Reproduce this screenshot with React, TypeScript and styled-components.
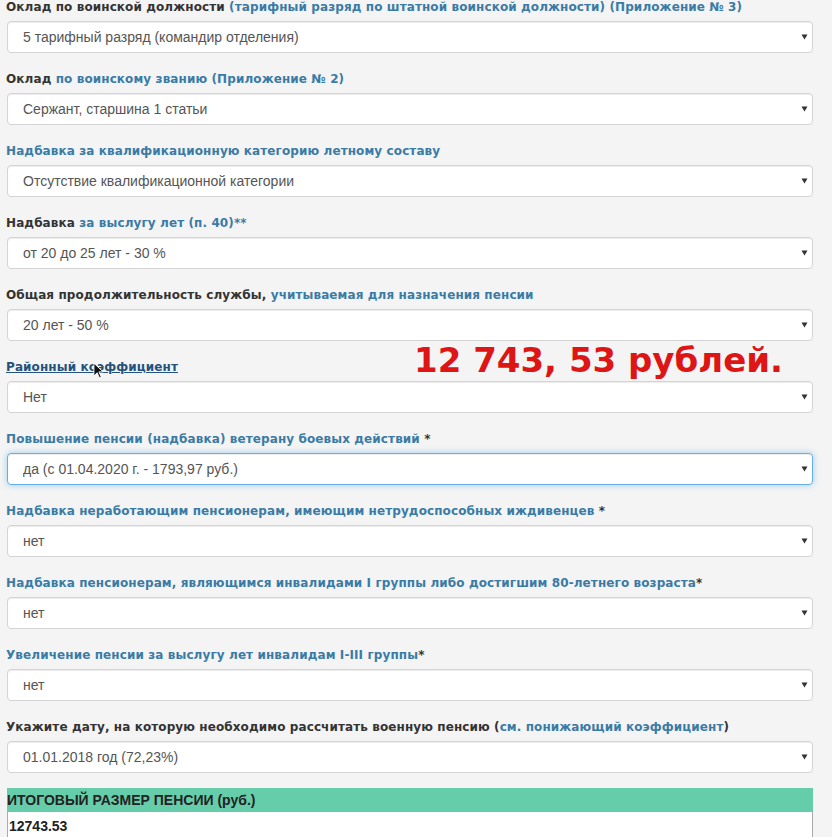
import React from 'react'
import styled, { createGlobalStyle } from 'styled-components'

const GlobalStyle = createGlobalStyle`
    html, body {
        margin: 0;
        padding: 0;
        background: #f4f4f4;
        overflow: hidden;
    }
`;

type Field = {
    label: React.ReactNode
    value: string
    focused?: boolean
}

const getFields = (): Field[] => [
    {
        label: <>Оклад по воинской должности <Link>(тарифный разряд по штатной воинской должности) (Приложение № 3)</Link></>,
        value: '5 тарифный разряд (командир отделения)',
    },
    {
        label: <>Оклад <Link>по воинскому званию (Приложение № 2)</Link></>,
        value: 'Сержант, старшина 1 статьи',
    },
    {
        label: <Link>Надбавка за квалификационную категорию летному составу</Link>,
        value: 'Отсутствие квалификационной категории',
    },
    {
        label: <>Надбавка <Link>за выслугу лет (п. 40)**</Link></>,
        value: 'от 20 до 25 лет - 30 %',
    },
    {
        label: <>Общая продолжительность службы, <Link>учитываемая для назначения пенсии</Link></>,
        value: '20 лет - 50 %',
    },
    {
        label: <HoverLink>Районный коэффициент</HoverLink>,
        value: 'Нет',
    },
    {
        label: <><Link>Повышение пенсии (надбавка) ветерану боевых действий</Link> *</>,
        value: 'да (с 01.04.2020 г. - 1793,97 руб.)',
        focused: true,
    },
    {
        label: <><Link>Надбавка неработающим пенсионерам, имеющим нетрудоспособных иждивенцев</Link> *</>,
        value: 'нет',
    },
    {
        label: <><Link>Надбавка пенсионерам, являющимся инвалидами I группы либо достигшим 80-летнего возраста</Link>*</>,
        value: 'нет',
    },
    {
        label: <><Link>Увеличение пенсии за выслугу лет инвалидам I-III группы</Link>*</>,
        value: 'нет',
    },
    {
        label: <>Укажите дату, на которую необходимо рассчитать военную пенсию (<Link>см. понижающий коэффициент</Link>)</>,
        value: '01.01.2018 год (72,23%)',
    },
]

const App = () => {
    const fields = getFields()
    return (
        <>
            <GlobalStyle />
            <Form>
                {fields.map((f, i) => (
                    <Group key={i}>
                        <Label>{f.label}</Label>
                        {i === 5 && (
                            <>
                                <Annotation>12 743, 53 рублей.</Annotation>
                                <Cursor viewBox="0 0 12 18">
                                    <path d="M1 1 L1 15 L4.5 11.5 L7 17 L9 16 L6.5 10.5 L11 10.5 Z" fill="#111" stroke="#fff" strokeWidth="1" />
                                </Cursor>
                            </>
                        )}
                        <SelectWrap>
                            <Select $focused={f.focused} defaultValue={f.value}>
                                <option value={f.value}>{f.value}</option>
                            </Select>
                            <Arrow viewBox="0 0 8 7">
                                <path d="M0.5 0.5 H7.5 L4 6.5 Z" fill="#333" />
                            </Arrow>
                        </SelectWrap>
                    </Group>
                ))}

                <Result>
                    <ResultHead>ИТОГОВЫЙ РАЗМЕР ПЕНСИИ (руб.)</ResultHead>
                    <ResultValue>12743.53</ResultValue>
                </Result>
            </Form>
        </>
    )
}

const Form = styled.div`
    width: 806px;
    margin: -2px 0 0 7px;
    display: flex;
    flex-direction: column;
`;

const Group = styled.div`
    position: relative;
    display: flex;
    flex-direction: column;
    gap: 5px;
    margin-bottom: 17px;
`;

const Label = styled.div`
    margin-left: -1px;
    font-family: "DejaVu Sans", sans-serif;
    font-weight: bold;
    font-size: 12px;
    letter-spacing: 0.1px;
    line-height: 18px;
    color: #333;
    white-space: nowrap;
`;

const Link = styled.span`
    color: #3a7ba6;
`;

const HoverLink = styled.span`
    color: #23527c;
    text-decoration: underline;
`;

const Annotation = styled.div`
    position: absolute;
    left: 407px;
    top: -18px;
    font-family: "DejaVu Sans", sans-serif;
    font-weight: bold;
    font-size: 34px;
    line-height: 40px;
    color: #dd1515;
    white-space: nowrap;
`;

const Cursor = styled.svg`
    position: absolute;
    left: 86px;
    top: 4px;
    width: 11px;
    height: 17px;
`;

const SelectWrap = styled.div`
    position: relative;
    height: 32px;
`;

const Select = styled.select<{ $focused?: boolean }>`
    appearance: none;
    -webkit-appearance: none;
    width: 100%;
    height: 32px;
    box-sizing: border-box;
    padding: 0 24px 0 15px;
    background: #fff;
    border: 1px solid ${p => (p.$focused ? '#66afe9' : '#d4d4d4')};
    border-radius: 4px;
    box-shadow: ${p =>
        p.$focused
            ? 'inset 0 1px 1px rgba(0,0,0,.075), 0 0 6px rgba(102,175,233,.6)'
            : 'inset 0 1px 1px rgba(0,0,0,.075)'};
    font-family: "Liberation Sans", Arial, sans-serif;
    font-size: 14px;
    color: #555;
    outline: none;
`;

const Arrow = styled.svg`
    position: absolute;
    right: 5px;
    top: 13px;
    width: 7px;
    height: 6px;
    pointer-events: none;
`;

const Result = styled.div`
    margin-top: -2px;
    display: flex;
    flex-direction: column;
    font-family: "Liberation Sans", Arial, sans-serif;
    font-weight: bold;
    font-size: 14px;
    color: #222;
`;

const ResultHead = styled.div`
    height: 24px;
    line-height: 24px;
    background: #66cdaa;
`;

const ResultValue = styled.div`
    height: 30px;
    line-height: 28px;
    padding-left: 1px;
    background: #fff;
    border-left: 1px solid #aaa;
    border-right: 1px solid #aaa;
`;

export default App
